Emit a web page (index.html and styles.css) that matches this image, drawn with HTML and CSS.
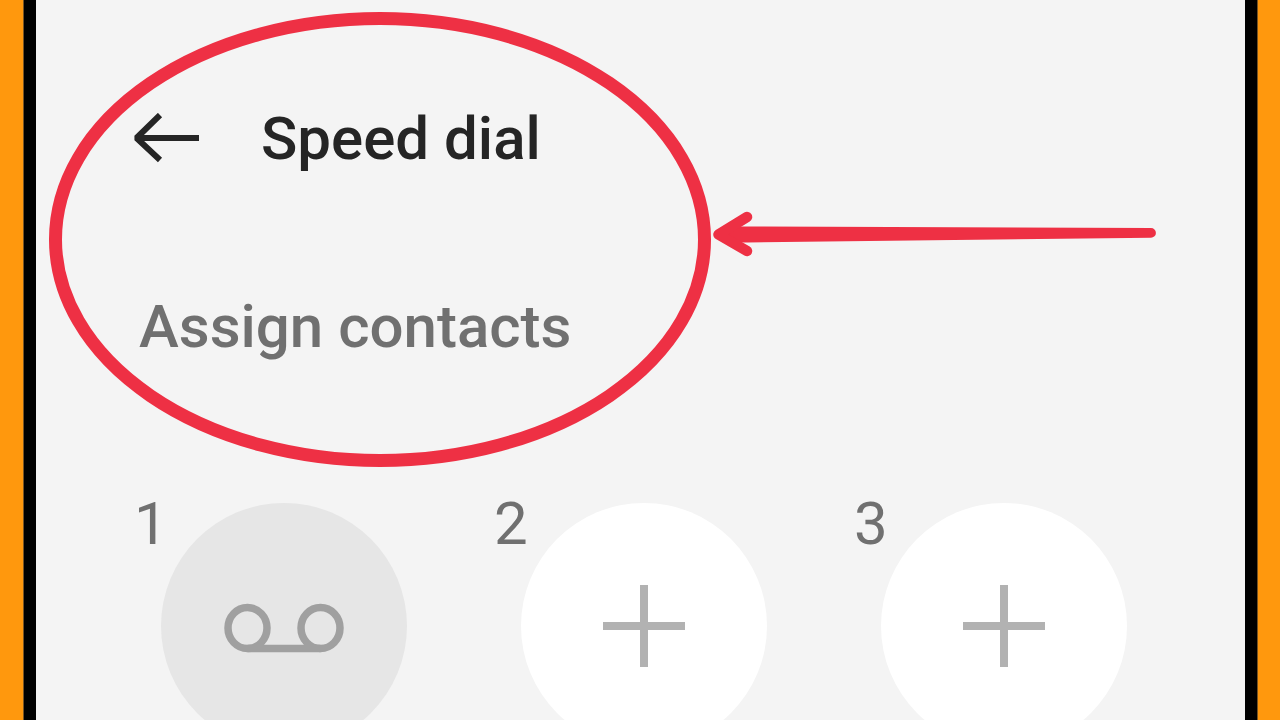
FILE: index.html
```html
<!DOCTYPE html>
<html lang="en">
<head>
<meta charset="utf-8">
<meta name="viewport" content="width=device-width, initial-scale=1">
<title>Speed dial</title>
<link rel="stylesheet" href="styles.css">
</head>
<body>
<div class="stage">
  <main class="screen">
    <header class="header">
      <button class="back" type="button" aria-label="Back">
        <svg width="66" height="52" viewBox="0 0 66 52" fill="none" stroke="#252525" stroke-width="6">
          <path d="M66 25H4M27 2L3.500 25L27 47" stroke-linejoin="bevel"/>
        </svg>
      </button>
      <h1 class="title">Speed dial</h1>
    </header>
    <h2 class="section">Assign contacts</h2>
    <ul class="slots">
      <li class="slot">
        <span class="digit">1</span>
        <button class="circle voicemail" type="button" aria-label="Voicemail">
          <svg width="120" height="54" viewBox="0 0 120 54" fill="none" stroke="#a0a0a0" stroke-width="7.5">
            <ellipse cx="23.5" cy="29" rx="19.5" ry="20.5"/>
            <ellipse cx="96.5" cy="29" rx="19.5" ry="20.5"/>
            <path d="M23.5 49.5H96.5"/>
          </svg>
        </button>
      </li>
      <li class="slot">
        <span class="digit">2</span>
        <button class="circle" type="button" aria-label="Add contact to 2">
          <svg width="82" height="82" viewBox="0 0 82 82" stroke="#b2b2b2" stroke-width="8">
            <path d="M0 41H82M41 0V82"/>
          </svg>
        </button>
      </li>
      <li class="slot">
        <span class="digit">3</span>
        <button class="circle" type="button" aria-label="Add contact to 3">
          <svg width="82" height="82" viewBox="0 0 82 82" stroke="#b2b2b2" stroke-width="8">
            <path d="M0 41H82M41 0V82"/>
          </svg>
        </button>
      </li>
    </ul>
  </main>
  <svg class="callout" width="1280" height="720" viewBox="0 0 1280 720" aria-hidden="true">
    <ellipse cx="380" cy="239.5" rx="324.5" ry="221" fill="none" stroke="#ee3044" stroke-width="13"/>
    <path d="M718 234.500L736 226.500H747L1151 228A4.900 4.900 0 0 1 1151 237.800L747 242.500H736Z" fill="#ee3044"/>
    <path d="M747 217L718.500 234.500L747 251" fill="none" stroke="#ee3044" stroke-width="10.500" stroke-linecap="round" stroke-linejoin="round"/>
  </svg>
</div>
</body>
</html>
```
FILE: styles.css
```css
* {
  box-sizing: border-box;
}

body {
  margin: 0;
  font-family: Roboto, "Liberation Sans", sans-serif;
  background: #ff980d;
}

h1,
h2,
ul {
  margin: 0;
  padding: 0;
}

button {
  padding: 0;
  border: 0;
  background: none;
  cursor: pointer;
}

svg {
  display: block;
}

.stage {
  position: relative;
  height: 100vh;
  padding: 0 23px 0 24px;
  overflow: hidden;
}

.screen {
  min-height: 100%;
  padding: 103px 32px 0 97px;
  border: solid #000;
  border-width: 0 12px;
  background: #f4f4f4;
  outline: 1px solid #7a5522;
}

.header {
  display: flex;
  align-items: center;
  gap: 62px;
}

.title,
.section,
.digit {
  font-size: 60px;
  line-height: 72px;
}

.title,
.section {
  font-weight: 500;
}

.title {
  color: #252525;
}

.section {
  margin-top: 116px;
  padding-left: 6px;
  color: #707070;
}

.slots {
  display: grid;
  grid-template-columns: repeat(3, 1fr);
  margin-top: 125px;
  list-style: none;
}

.slot {
  position: relative;
  padding: 15px 0 0 28px;
}

.digit {
  position: absolute;
  top: 0;
  left: 1px;
  color: #707070;
}

.circle {
  display: grid;
  place-items: center;
  width: 246px;
  height: 246px;
  border-radius: 50%;
  background: #fff;
}

.voicemail {
  background: #e6e6e6;
}

.callout {
  position: absolute;
  top: 0;
  left: 0;
  pointer-events: none;
}
```
